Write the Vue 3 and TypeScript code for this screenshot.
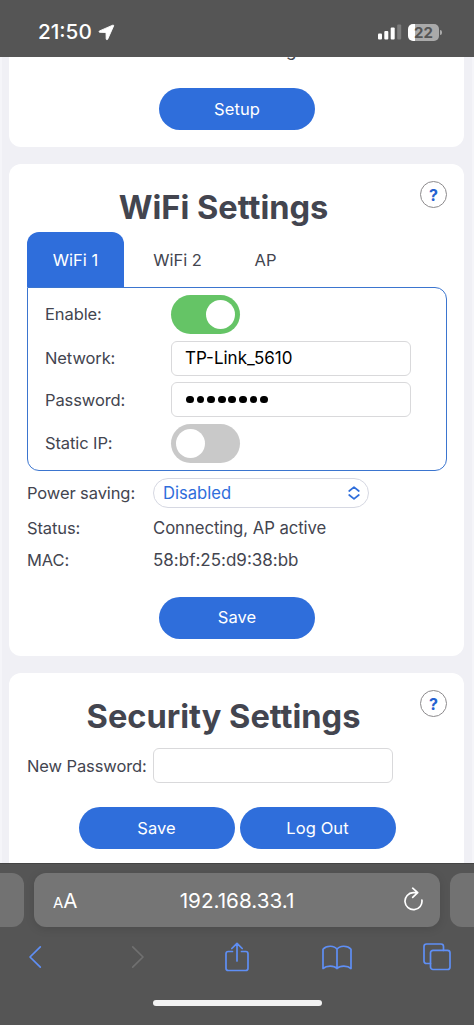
<script setup lang="ts">
import { ref } from 'vue'

const tabs = ['WiFi 1', 'WiFi 2', 'AP']
const activeTab = ref(0)
const enabled = ref(true)
const staticIp = ref(false)
const network = ref('TP-Link_5610')
const passwordLength = 8
const newPassword = ref('')
</script>

<template>
  <div class="phone">
    <header class="status">
      <div class="clock">
        <span class="time">21:50</span>
        <svg class="arrow" width="17" height="17" viewBox="0 0 17 17"><path d="M14.700 1.200 1.600 6.900C.700 7.300.900 8.300 1.800 8.300L8 8.500 8.200 14.900C8.200 15.800 9.300 16 9.700 15.200L15.600 2C15.900 1.400 15.300.900 14.700 1.200Z" fill="#fff" stroke="#fff" stroke-width="0.900" stroke-linejoin="round" /></svg>
      </div>
      <div class="indicators">
        <svg width="25" height="16" viewBox="0 0 25 16">
          <rect x="1" y="9.500" width="4" height="6" rx="1" fill="#fff" />
          <rect x="7.300" y="7" width="4" height="8.500" rx="1" fill="#fff" />
          <rect x="13.700" y="3.500" width="4" height="12" rx="1" fill="#fff" />
          <rect x="20.200" y="0.500" width="4" height="15" rx="1" fill="#7c7c7c" />
        </svg>
        <div class="battery"><span>22</span></div>
        <i class="battery-tip"></i>
      </div>
    </header>

    <main class="page">
      <section class="card setup">
        <div class="clipped-line">g</div>
        <button class="btn">Setup</button>
      </section>

      <section class="card wifi">
        <button class="help">?</button>
        <h1>WiFi Settings</h1>
        <nav class="tabs">
          <button v-for="(tab, i) in tabs" :key="tab" class="tab" :class="{ active: i === activeTab }" @click="activeTab = i">{{ tab }}</button>
        </nav>
        <div class="panel">
          <div class="row tall">
            <label>Enable:</label>
            <button class="toggle" :class="{ on: enabled }" @click="enabled = !enabled"><i></i></button>
          </div>
          <div class="row">
            <label>Network:</label>
            <input v-model="network" class="field" />
          </div>
          <div class="row">
            <label>Password:</label>
            <div class="field dots"><i v-for="n in passwordLength" :key="n"></i></div>
          </div>
          <div class="row tall">
            <label>Static IP:</label>
            <button class="toggle" :class="{ on: staticIp }" @click="staticIp = !staticIp"><i></i></button>
          </div>
        </div>
        <div class="info select-row">
          <label>Power saving:</label>
          <div class="select">
            <span>Disabled</span>
            <svg width="12" height="14" viewBox="0 0 12 14" fill="none" stroke="#2f6edb" stroke-width="1.700" stroke-linecap="round" stroke-linejoin="round"><path d="M1.200 5 6 1.200 10.800 5M1.200 9 6 12.800 10.800 9" /></svg>
          </div>
        </div>
        <div class="info"><label>Status:</label><span class="status-text">Connecting, AP active</span></div>
        <div class="info"><label>MAC:</label><span>58:bf:25:d9:38:bb</span></div>
        <button class="btn save">Save</button>
      </section>

      <section class="card security">
        <button class="help">?</button>
        <h1>Security Settings</h1>
        <div class="info new-password">
          <label>New Password:</label>
          <input v-model="newPassword" class="field" />
        </div>
        <div class="actions">
          <button class="btn">Save</button>
          <button class="btn">Log Out</button>
        </div>
      </section>
    </main>

    <footer class="browser">
      <div class="address-row">
        <div class="side left"></div>
        <div class="address">
          <span class="reader"><small>A</small>A</span>
          <span class="url">192.168.33.1</span>
          <svg class="reload" width="20" height="24" viewBox="0 0 20 24" fill="none" stroke="#fff" stroke-width="1.700" stroke-linecap="round" stroke-linejoin="round"><path d="M14.500 5.700H10.200A8.500 8.500 0 1 0 18.900 13M9.700 1.200 14.700 5.700 9.700 10.300" /></svg>
        </div>
        <div class="side right"></div>
      </div>
      <nav class="tools">
        <svg width="14" height="24" viewBox="0 0 14 24"><path d="M12.300 1.800 2 12 12.300 22.200" /></svg>
        <svg class="forward" width="14" height="24" viewBox="0 0 14 24"><path d="M1.700 1.800 12 12 1.700 22.200" /></svg>
        <svg class="share" width="24" height="30" viewBox="0 0 24 30"><path d="M7.500 9.500H3.300Q1 9.500 1 11.800V26.200Q1 28.500 3.300 28.500H20.700Q23 28.500 23 26.200V11.800Q23 9.500 20.700 9.500H16.500M12 19V1.500M6.800 6.500 12 1.300 17.200 6.500" /></svg>
        <svg class="book" width="30" height="25" viewBox="0 0 30 25"><path d="M15 4.300C12.500.300 4.500.200 1 4.200V23.500C4.500 20.300 12 20.300 15 23.500C18 20.300 25.500 20.300 29 23.500V4.200C25.500.200 17.500.300 15 4.300ZM15 4.300V23.500" /></svg>
        <svg class="windows" width="28" height="28" viewBox="0 0 28 28"><path d="M7.500 20.500H3.500Q1 20.500 1 18V3.500Q1 1 3.500 1H18Q20.500 1 20.500 3.500V7.300" /><rect x="7.500" y="7.300" width="19.500" height="19.200" rx="2.500" /></svg>
      </nav>
      <div class="home"></div>
    </footer>
  </div>
</template>

<style>
body { margin: 0; }
</style>

<style scoped>
* { box-sizing: border-box; }
.phone {
  width: 474px;
  height: 1025px;
  display: flex;
  flex-direction: column;
  overflow: hidden;
  background: #f0f0f5;
  color: #43454f;
  font-family: Inter, "Liberation Sans", sans-serif;
  font-size: 17px;
}
button, input { font: inherit; color: inherit; border: 0; padding: 0; margin: 0; }
button { background: none; }
.status {
  position: relative;
  z-index: 2;
  flex: none;
  height: 57px;
  padding: 7px 32px 0 38px;
  background: #555;
  color: #fff;
  display: flex;
  justify-content: space-between;
  align-items: center;
}
.clock { display: flex; align-items: center; gap: 6px; }
.time { font-size: 20.700px; font-weight: 500; line-height: 24px; }
.indicators { display: flex; align-items: center; }
.battery {
  width: 31px;
  height: 17px;
  margin-left: 6px;
  border-radius: 5px;
  background: linear-gradient(90deg, #fff 7px, #aaa 7px);
  color: #555;
  font-size: 15px;
  font-weight: 700;
  line-height: 17px;
  text-align: center;
}
.battery-tip { width: 2px; height: 5px; margin-left: 1px; border-radius: 0 3px 3px 0; background: #aaa; }
.page {
  height: 806px;
  flex: none;
  padding: 0 10px 0 9px;
  overflow: hidden;
  box-shadow: inset 2px 0 #f5f5f9, inset -2px 0 #f5f5f9;
}
.card { position: relative; background: #fff; border-radius: 12px; padding: 0 17px 0 18px; }
.setup { height: 90px; border-radius: 0 0 12px 12px; padding-top: 31px; }
.clipped-line { height: 20px; line-height: 20px; margin: -48px 0 28px 259px; }
.btn {
  display: block;
  width: 156px;
  height: 42px;
  margin: 0 auto;
  padding-bottom: 1px;
  border-radius: 21px;
  background: #2f6edb;
  color: #fff;
  font-size: 16.500px;
  letter-spacing: 0.100px;
}
.wifi { height: 492px; margin-top: 17px; padding-top: 23px; }
.help {
  position: absolute;
  top: 17px;
  right: 17px;
  width: 27px;
  height: 27px;
  border: 1px solid #8c8a8c;
  border-radius: 50%;
  color: #2462d0;
  font-size: 16px;
  font-weight: 700;
  line-height: 27px;
}
h1 { margin: 0 27px 0 0; height: 40px; line-height: 40px; text-align: center; font-size: 32.600px; font-weight: 700; white-space: nowrap; }
.tabs { display: flex; height: 54.500px; margin-top: 5px; }
.tab { width: 107px; padding-top: 1px; font-size: 16.500px; }
.tab.active { width: 97px; border-radius: 12px 12px 0 0; background: #2f6edb; color: #fff; }
.tab:last-child { width: 69px; }
.panel {
  height: 184px;
  border: 1.500px solid #3b75cf;
  border-radius: 0 12px 12px 12px;
  padding: 7px 17px 0;
  display: flex;
  flex-direction: column;
  gap: 6.500px;
}
.row { display: flex; align-items: center; height: 35px; flex: none; }
.row.tall { height: 39.500px; }
label { letter-spacing: -0.100px; font-size: 16.500px; }
.row label { width: 126px; }
.field {
  width: 240px;
  height: 35px;
  border: 1.500px solid #d9d9db;
  border-radius: 6px;
  padding: 0 13px;
  background: #fff;
  color: #000;
}
.dots { display: flex; align-items: center; gap: 2.800px; padding-left: 14px; }
.dots i { width: 7.800px; height: 7.800px; border-radius: 50%; background: #000; }
.toggle { width: 69px; height: 39px; border-radius: 20px; background: #c9c9c9; padding: 0 5px; display: flex; align-items: center; }
.toggle i { width: 29px; height: 29px; border-radius: 50%; background: #fff; }
.toggle.on { background: #65c466; justify-content: flex-end; }
.info { display: flex; align-items: center; height: 32px; }
.info label { width: 126px; white-space: nowrap; }
.status-text { font-size: 16.700px; letter-spacing: -0.050px; }
.select-row { height: 35px; margin: 5px 0 1px; }
.select {
  width: 216px;
  height: 30px;
  border: 1px solid #d6d8e2;
  border-radius: 15px;
  padding: 0 8px 0 9px;
  display: flex;
  align-items: center;
  justify-content: space-between;
  color: #2f6edb;
  font-size: 16.600px;
}
.save { margin-top: 21px; }
.security { height: 200px; margin-top: 17px; padding-top: 23px; }
.new-password { height: 35px; margin-top: 12px; }
.actions { display: flex; justify-content: center; gap: 5px; margin-top: 24px; }
.actions .btn { margin: 0; }
.browser { flex: none; height: 162px; padding-top: 9px; background: #555; border-top: 1px solid #444; }
.address-row { display: flex; justify-content: space-between; height: 54px; }
.address { width: 406px; border-radius: 12px; background: #757575; color: #fff; display: grid; grid-template-columns: 70px 1fr 70px; align-items: center; box-shadow: 0 2px 10px rgba(0, 0, 0, 0.120); }
.side { width: 24px; background: #727272; }
.left { border-radius: 0 12px 12px 0; }
.right { border-radius: 12px 0 0 12px; }
.reader { padding-left: 19px; font-size: 20.500px; }
.reader small { font-size: 15px; }
.url { text-align: center; font-size: 20.700px; }
.reload { justify-self: end; margin: 0 17px 2px 0; }
.tools { display: flex; align-items: center; height: 60px; padding-left: 28px; }
.tools svg { flex: none; fill: none; stroke: #5f8ff5; stroke-width: 1.700; stroke-linecap: round; stroke-linejoin: round; }
.tools .forward { stroke: #707070; margin-left: 89px; }
.tools .share { margin-left: 80px; margin-bottom: 1px; }
.tools .book { margin-left: 73px; }
.tools .windows { margin-left: 71px; }
.home { width: 169px; height: 6px; margin: 13px auto 0; border-radius: 3px; background: #f2f2f2; }
</style>
